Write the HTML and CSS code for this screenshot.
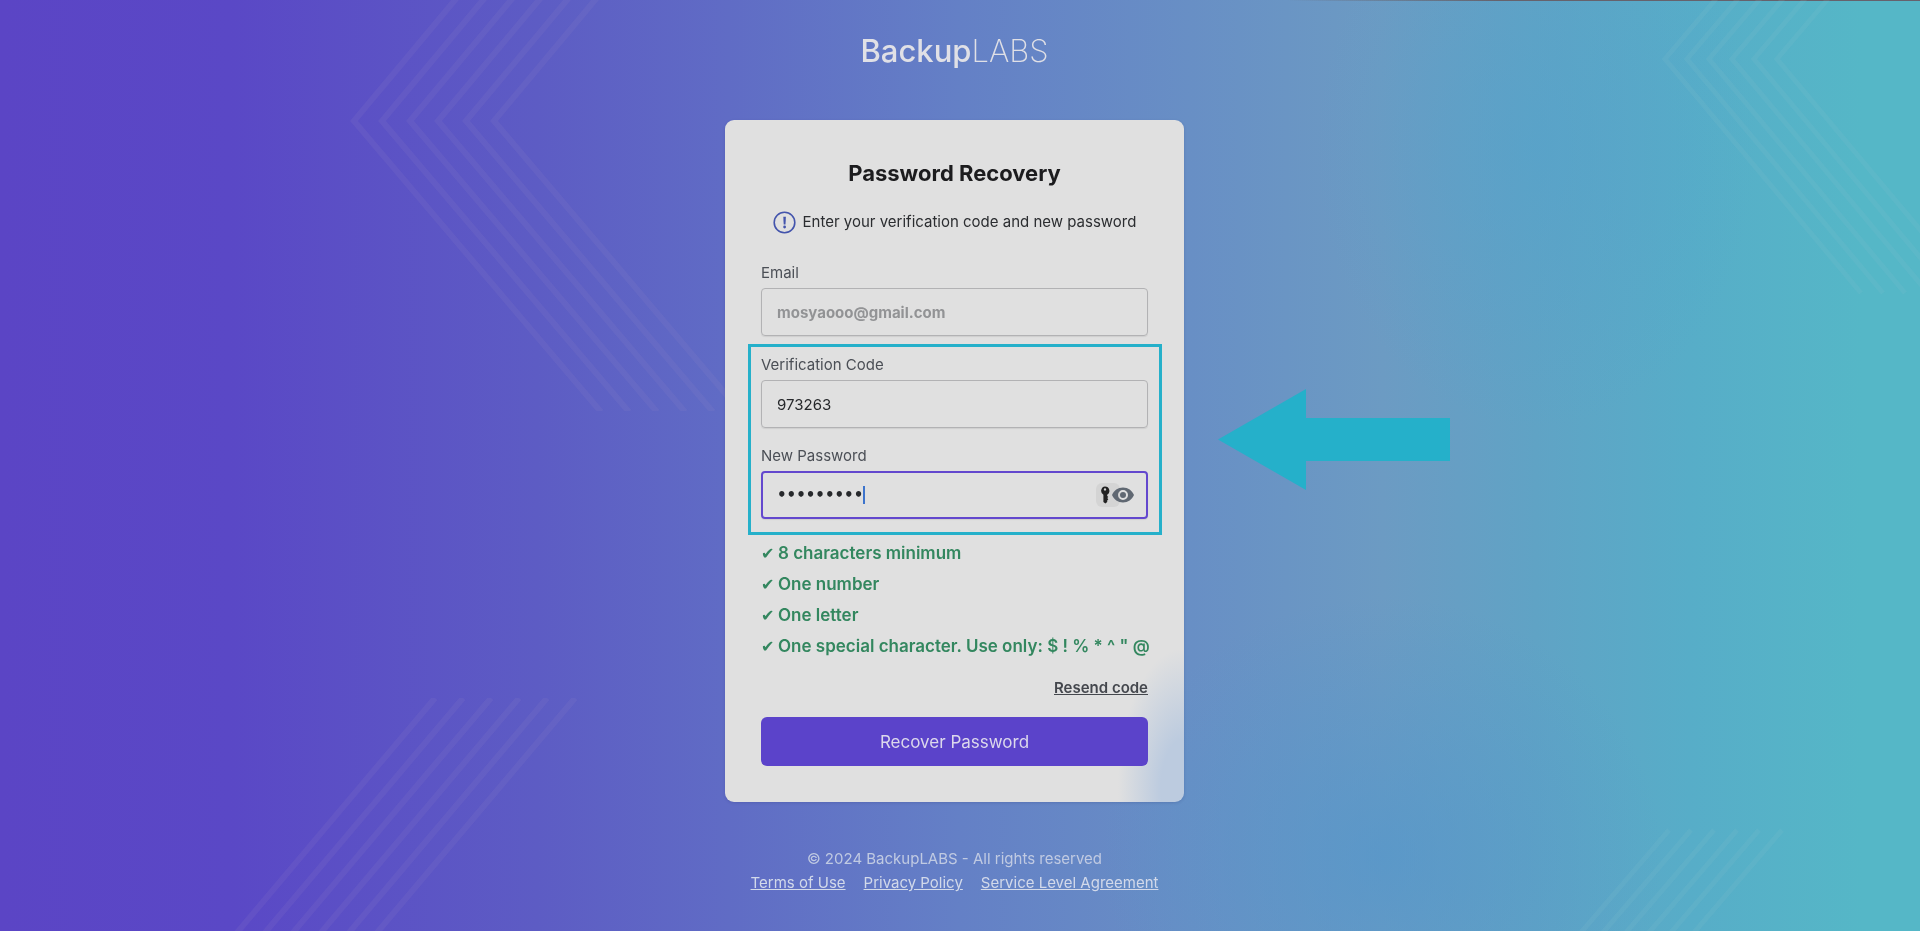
FILE: index.html
```html
<!DOCTYPE html>
<html lang="en">
<head>
    <meta charset="UTF-8">
    <meta name="viewport" content="width=device-width, initial-scale=1.0">
    <title>Password Recovery</title>
    <link rel="stylesheet" href="styles.css">
</head>
<body>
    <!-- Background chevrons -->
    <svg class="bg-lines" viewBox="0 0 1920 931" preserveAspectRatio="xMidYMid slice" aria-hidden="true">
        <defs>
            <path id="chevron" d="M110 -6 L4 121 L251 412"/>
            <path id="slash" d="M190 0 L-10 237"/>
            <path id="chevronSmall" d="M54 -1 L3 59 L199 293"/>
            <path id="slashSmall" d="M87 0 L-4 106"/>
            <clipPath id="clipLeft"><rect x="0" y="0" width="900" height="411"/></clipPath>
            <clipPath id="clipLeftBottom"><rect x="0" y="698" width="900" height="233"/></clipPath>
        </defs>
        <g class="lines" clip-path="url(#clipLeft)">
            <use href="#chevron" x="350"/>
            <use href="#chevron" x="378"/>
            <use href="#chevron" x="406"/>
            <use href="#chevron" x="434"/>
            <use href="#chevron" x="462"/>
            <use href="#chevron" x="490"/>
        </g>
        <g class="lines" clip-path="url(#clipLeftBottom)">
            <use href="#slash" x="245" y="698"/>
            <use href="#slash" x="273" y="698"/>
            <use href="#slash" x="301" y="698"/>
            <use href="#slash" x="329" y="698"/>
            <use href="#slash" x="357" y="698"/>
            <use href="#slash" x="385" y="698"/>
        </g>
        <g class="lines lines-small">
            <use href="#chevronSmall" x="1662"/>
            <use href="#chevronSmall" x="1684"/>
            <use href="#chevronSmall" x="1706"/>
            <use href="#chevronSmall" x="1729"/>
            <use href="#chevronSmall" x="1751"/>
            <use href="#chevronSmall" x="1774"/>
        </g>
        <g class="lines lines-small">
            <use href="#slashSmall" x="1582" y="830"/>
            <use href="#slashSmall" x="1604" y="830"/>
            <use href="#slashSmall" x="1627" y="830"/>
            <use href="#slashSmall" x="1650" y="830"/>
            <use href="#slashSmall" x="1672" y="830"/>
            <use href="#slashSmall" x="1695" y="830"/>
        </g>
    </svg>

    <div class="page">
        <header class="logo">Backup<span>LABS</span></header>

        <main class="card">
            <h1>Password Recovery</h1>
            <p class="info">
                <svg width="23" height="23" viewBox="0 0 23 23" aria-hidden="true">
                    <circle cx="11.5" cy="11.5" r="10.3" fill="none" stroke="#4354ac" stroke-width="1.6"/>
                    <path d="M10.3 5.8h2.600l-.4 7.600h-1.800z" fill="#4354ac"/>
                    <circle cx="11.6" cy="16" r="1.4" fill="#4354ac"/>
                </svg>
                Enter your verification code and new password
            </p>

            <form>
                <div class="form-group">
                    <label for="email">Email</label>
                    <input type="email" id="email" name="email" value="mosyaooo@gmail.com" disabled>
                </div>

                <div class="highlight">
                    <div class="form-group">
                        <label for="code">Verification Code</label>
                        <input type="text" id="code" name="code" value="973263">
                    </div>
                    <div class="form-group">
                        <label for="password">New Password</label>
                        <div class="password-field">
                            <input type="password" id="password" name="password" value="backup#24">
                            <span class="caret"></span>
                            <div class="field-icons">
                                <button type="button" class="key" aria-label="Saved passwords">
                                    <svg width="10" height="18" viewBox="0 0 10 18">
                                        <path fill="#222" fill-rule="evenodd" d="M5 0.5a4.4 4.4 0 0 1 2.2 8.2v1.2l1.1 1-1.1 1.1 1.1 1.2-1.1 1.2v1.6L5.4 17.6 3.4 16V8.7A4.4 4.4 0 0 1 5 .5zm0 1.7a1.2 1.2 0 1 0 0 2.4 1.2 1.2 0 0 0 0-2.4z"/>
                                    </svg>
                                </button>
                                <button type="button" class="eye" aria-label="Show password">
                                    <svg width="22" height="16" viewBox="0 0 22 16">
                                        <path fill="#606872" fill-rule="evenodd" d="M11 .5c5 0 9.200 3.100 11 7.500-1.800 4.400-6 7.500-11 7.500S1.800 12.400 0 8C1.800 3.600 6 .5 11 .5zM11 3a5 5 0 1 0 0 10 5 5 0 0 0 0-10zm0 2a3 3 0 1 1 0 6 3 3 0 0 1 0-6z"/>
                                    </svg>
                                </button>
                            </div>
                        </div>
                    </div>
                    <svg class="arrow" width="232" height="101" viewBox="0 0 232 101" aria-hidden="true">
                        <path d="M0 50.500 88 0v29h144v43H88v29z" fill="#25b0ca"/>
                    </svg>
                </div>

                <ul class="rules">
                    <li>8 characters minimum</li>
                    <li>One number</li>
                    <li>One letter</li>
                    <li>One special character. Use only: $ ! % * ^ " @</li>
                </ul>

                <a href="#" class="resend">Resend code</a>
                <button type="submit" class="submit">Recover Password</button>
            </form>
        </main>

        <footer>
            <p>© 2024 BackupLABS - All rights reserved</p>
            <nav>
                <a href="#">Terms of Use</a>
                <a href="#">Privacy Policy</a>
                <a href="#">Service Level Agreement</a>
            </nav>
        </footer>
    </div>
</body>
</html>
```
FILE: styles.css
```css
* {
    box-sizing: border-box;
}

body {
    margin: 0;
    min-height: 100vh;
    font-family: Inter, "Liberation Sans", sans-serif;
    font-size: 15px;
    color: #2b2d30;
    background:
        linear-gradient(90deg, transparent 67%, #66626c 78%) top / 100% 1px no-repeat,
        radial-gradient(ellipse 220px 280px at 80% 16%, rgba(83, 162, 204, 0.5), transparent),
        radial-gradient(ellipse 280px 260px at 72% 92%, rgba(80, 150, 204, 0.6), transparent),
        linear-gradient(90deg, #5b45c5 0%, #5a48c6 12%, #5d5cc4 28%, #606cc5 38%, #6480c6 50%, #688fc5 62%, #6c9bc3 72%, #60a3c5 80%, #57adc8 88%, #55b7c7 97%);
}

.bg-lines {
    position: fixed;
    top: 0;
    left: 0;
    width: 100%;
    height: 100%;
}

.lines {
    fill: none;
    stroke: rgba(160, 150, 200, 0.11);
    stroke-width: 6;
}

.lines-small {
    stroke: rgba(130, 195, 205, 0.16);
    stroke-width: 5;
}

.page {
    position: relative;
    display: flex;
    flex-direction: column;
    align-items: center;
    padding: 29px 11px 0 0;
}

.logo {
    font-size: 31px;
    line-height: 44px;
    font-weight: 500;
    color: #e0e0e6;
    margin-bottom: 47px;
}

.logo span {
    font-weight: 200;
}

.card {
    width: 459px;
    max-width: 100%;
    padding: 36px;
    border-radius: 9px;
    background: radial-gradient(ellipse 66px 140px at 100% 98%, #bccbdf 35%, #e0e0e0 100%) #e0e0e0;
    box-shadow: 0 1px 3px rgba(40, 50, 110, 0.2);
}

h1 {
    margin: 0 0 20px;
    font-size: 22px;
    line-height: 34px;
    text-align: center;
    color: #1c1c1e;
}

.info {
    display: flex;
    justify-content: center;
    align-items: center;
    gap: 7px;
    margin: 0 0 27px;
    line-height: 24px;
}

.form-group {
    margin-bottom: 16px;
}

label {
    display: block;
    margin-bottom: 3px;
    line-height: 24px;
    color: #4b4f56;
}

input {
    display: block;
    width: 100%;
    height: 48px;
    padding: 0 15px;
    border: 1px solid #b2b2b4;
    border-radius: 4px;
    background: transparent;
    box-shadow: 0 1px 1px rgba(0, 0, 0, 0.08);
    font: inherit;
    color: #26282b;
}

input:disabled {
    font-weight: 700;
    color: #929395;
}

/* Marked step of the form */
.highlight {
    position: relative;
    margin: -8px -14px 0 -13px;
    padding: 6px 11px 13px 10px;
    border: 3px solid #25b0ca;
}

.highlight .form-group:nth-child(2) {
    margin-bottom: 0;
}

.password-field {
    position: relative;
}

.password-field input {
    padding: 0 14px;
    border: 2px solid #6348ce;
    font-family: "DejaVu Sans", sans-serif;
    font-weight: 700;
}

.caret {
    position: absolute;
    top: 15px;
    left: 102px;
    width: 2px;
    height: 18px;
    background: #3d74cc;
}

.field-icons {
    position: absolute;
    top: 12px;
    right: 14px;
    display: flex;
    align-items: center;
}

.field-icons button {
    display: flex;
    align-items: center;
    padding: 0;
    border: none;
    background: none;
}

.field-icons .key {
    width: 24px;
    height: 24px;
    padding-left: 4px;
    margin-right: -8px;
    border-radius: 6px;
    background: #d4d4d4;
}

.arrow {
    position: absolute;
    top: 42px;
    left: calc(100% + 59px);
}

.rules {
    margin: 3px 0 13px;
    padding: 0;
    list-style: none;
    font-size: 17px;
    font-weight: 600;
    line-height: 31px;
    white-space: nowrap;
    color: #33875f;
}

.rules li::before {
    content: "✔";
    display: inline-block;
    width: 17px;
    font-family: "DejaVu Sans", sans-serif;
    font-size: 16px;
    font-weight: 400;
    line-height: 1;
}

.resend {
    display: block;
    width: fit-content;
    margin: 0 0 16px auto;
    font-weight: 600;
    line-height: 26px;
    color: #44474d;
}

.submit {
    display: block;
    width: 100%;
    height: 49px;
    border: none;
    border-radius: 6px;
    background: #5b43ca;
    color: #dcd8ec;
    font: inherit;
    font-size: 17px;
    cursor: pointer;
}

footer {
    padding: 45px 0 20px;
    line-height: 24px;
    text-align: center;
    color: #c0cae2;
}

footer p {
    margin: 0;
}

footer nav {
    display: flex;
    gap: 18px;
}

footer a {
    color: #d2d9ea;
}
```
